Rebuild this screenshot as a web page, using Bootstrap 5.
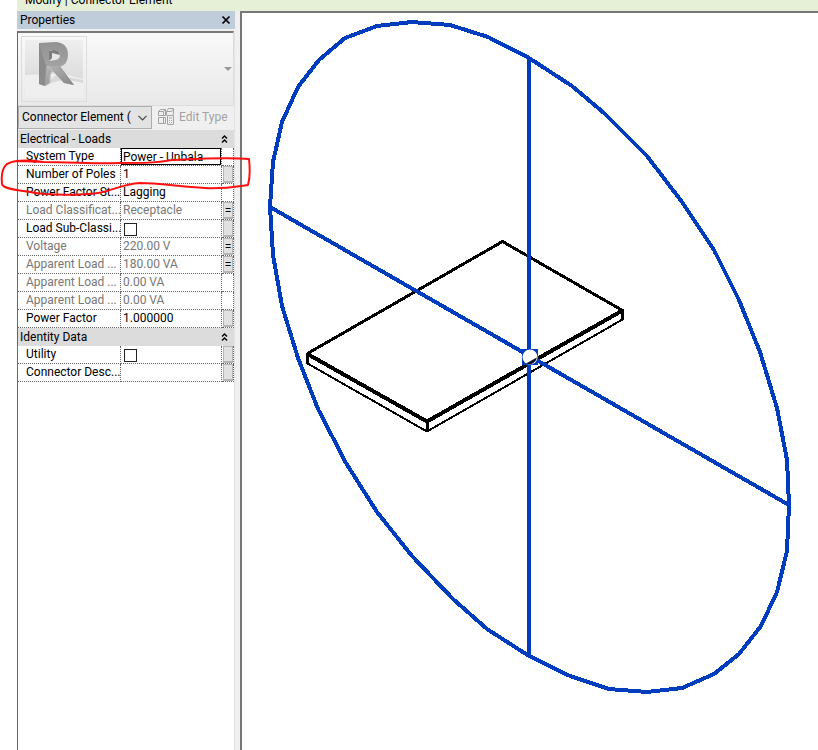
<!DOCTYPE html>
<html lang="en">
<head>
<meta charset="utf-8">
<meta name="viewport" content="width=device-width, initial-scale=1">
<title>Connector Element</title>
<link href="https://cdn.jsdelivr.net/npm/bootstrap@5.3.0/dist/css/bootstrap.min.css" rel="stylesheet">
<style>
body{font-family:Roboto,"Open Sans",sans-serif;font-size:12px;line-height:16px;color:#000;background:#fff}
.app{padding-left:17px}
.ribbon{height:11px;background:#e5f0d7;padding-left:8px}
.ribbon-title{line-height:16px;margin-bottom:3px}
.side{width:223px;background:#f0f0f0;padding-right:5px}
.side-title{height:18px;background:#bfcddb;padding:0 4px 0 3px}
.side-title h1{font-size:12px;line-height:18px;font-weight:400}
.icon-btn{border:0;background:none;padding:0;color:inherit;line-height:0}
.side-body{margin-top:2px;border-left:1px solid #696969;border-right:1px solid #e3e3e3}
.type-box{height:75px;border-top:2px solid #777;border-bottom:1px solid #dcdcdc;border-right:1px solid #dcdcdc;background:linear-gradient(#f9f9f9,#e9e9e9);padding:3px 1px 3px 3px}
.thumb{width:66px;height:66px;border:1px solid #dcdcdc}
.type-row{height:24px;background:#f0f0f0}
.type-select{width:134px;height:23px;border:1px solid #adadad;border-radius:0;background-color:#e3e3e3;padding:0 20px 0 3px;font-size:12px;line-height:21px;appearance:none;color:#000}
.select-wrap .chev{right:5px;top:9px;pointer-events:none}
.edit-btn{font-size:12px;color:#a3a3a3;gap:4px;margin-left:6px;padding:0 0 3px;border:0;background:none}
.props{table-layout:fixed;width:100%;border-collapse:separate;border-spacing:0;background:#fff}
.props td,.props th{height:18px;padding:0;font-weight:400;line-height:16px;vertical-align:middle;white-space:nowrap}
.props .group{background:#dcdcdc;padding:0 6px 0 2px}
.props .cell{border-right:1px dotted #666;border-bottom:1px dotted #666}
.props .name{padding-left:8px}
.props label{display:block;height:17px;line-height:16px}
.props input[type=text]{display:block;width:100%;height:17px;border:0;padding:0 0 1px 2px;background:none;font-size:12px;line-height:16px;color:#000;outline:0}
.props input.active-field{border:1px solid #000;padding:0 0 0 1px}
.props .off label,.props .off input[type=text]{color:#777}
.props input[type=checkbox]{appearance:none;display:block;width:13px;height:13px;margin:2px 0 0 3px;border:1px solid #222;background:#fff}
.assoc{display:block;width:10px;height:17px;margin-left:1px;padding:2px 0 0;border:1px solid #b5b5b5;border-bottom-width:2px;background:#e1e1e1;font-size:12px;line-height:12px;color:#000}
.view{border-left:2px solid #777;border-top:2px solid #777;background:#fff}
.markup{left:0;top:150px;pointer-events:none}
</style>
<script src="https://cdn.jsdelivr.net/npm/bootstrap@5.3.0/dist/js/bootstrap.bundle.min.js"></script>
</head>
<body>
<div class="app position-relative d-flex flex-column min-vh-100">
  <header class="ribbon d-flex align-items-end overflow-hidden flex-shrink-0">
    <div class="ribbon-title">Modify | Connector Element</div>
  </header>
  <main class="d-flex flex-grow-1">
    <aside class="side d-flex flex-column flex-shrink-0">
      <div class="side-title d-flex align-items-center justify-content-between">
        <h1 class="m-0">Properties</h1>
        <button class="icon-btn" type="button" aria-label="Close"><svg width="10" height="10" viewBox="0 0 10 10"><path d="M1.5 1.5 8.5 8.5M8.5 1.5 1.5 8.5" stroke="#000" stroke-width="1.7"/></svg></button>
      </div>
      <div class="side-body flex-grow-1 bg-white">
        <div class="type-box d-flex align-items-center justify-content-between">
          <div class="thumb">
            <svg width="64" height="64" viewBox="0 0 64 64" aria-hidden="true">
              <defs>
                <linearGradient id="back" x2="0" y2="1"><stop stop-color="#efefef"/><stop offset="1" stop-color="#dcdcdc"/></linearGradient>
                <linearGradient id="face" x2="0" y2="1"><stop stop-color="#929292"/><stop offset="1" stop-color="#b0b0b0"/></linearGradient>
                <linearGradient id="leg" x2="1" y2="1"><stop stop-color="#b5b5b5"/><stop offset="1" stop-color="#858585"/></linearGradient>
              </defs>
              <path d="M3 3H61V42L42 37 3 38Z" fill="url(#back)"/>
              <path d="M3 38 42 37 61 45V61H3Z" fill="#efefef"/>
              <path d="M22 48 34 38 61 43V46L44 42Z" fill="#d9d9d9"/>
              <path d="M17 6 34 5Q46 6 46 18 46 27 38 30L52 48 42 46 29 32 28 46 23 49 17 47ZM27 14V24L34 23Q38 22 38 18 37 13 32 13Z" fill="url(#face)" fill-rule="evenodd"/>
              <path d="M25 29 38 29 52 48 42 46 31 34 28 36V46L23 49Z" fill="url(#leg)"/>
              <path d="M17 6 24 29 23 49 17 47Z" fill="#8b8b8b"/>
              <path d="M27 14V24L30 21V16L38 18Q37 13 32 13Z" fill="#7d7d7d"/>
              <path d="M25 29 31 34 28 38V46L23 49" fill="none" stroke="#c4c4c4"/>
            </svg>
          </div>
          <button class="icon-btn" type="button" aria-label="Choose type"><svg width="8" height="4" viewBox="0 0 8 4"><path d="M0 0H8L4 4Z" fill="#999"/></svg></button>
        </div>
        <div class="type-row d-flex">
          <div class="select-wrap position-relative">
            <select class="type-select" aria-label="Element filter"><option>Connector Element (1)</option></select>
            <svg class="chev position-absolute" width="9" height="6" viewBox="0 0 9 6"><path d="M.5 .8 4.5 4.8 8.5 .8" fill="none" stroke="#444" stroke-width="1.2"/></svg>
          </div>
          <button class="edit-btn d-flex align-items-center" type="button" disabled>
            <svg width="17" height="17" viewBox="0 0 17 17" fill="none" stroke="#a3a3a3"><path d="M.5 3.5 2.5 1.5H7.5V7.500H.5ZM8.500 3.500 10.500 .5H15.500V6L14 7.500M8.500 3.500V7.500M.5 9.500H7.500V15.500H.5ZM.5 3.500H5.500V7.500M5.500 3.500 7.500 1.500M8.500 3.500H13.500L15.500 1M5.500 9.500V15.500"/><path d="M9.500 7.500H15.500V16.500H9.500Z" fill="#f0f0f0"/><path d="M11 10H14M11 12.500H12M13 12.500H14M11 14.500H12M13 14.500H14"/></svg>
            <span>Edit Type</span>
          </button>
        </div>
        <table class="props">
          <colgroup><col style="width:103px"><col><col style="width:12px"></colgroup>
          <tbody>
          <tr><th class="group" colspan="3" scope="colgroup"><div class="d-flex align-items-center justify-content-between"><span>Electrical - Loads</span><button class="icon-btn" type="button" aria-label="Collapse Electrical - Loads"><svg width="7" height="8" viewBox="0 0 7 8"><path d="M1 3.500 3.500 1 6 3.500M1 7.500 3.500 5 6 7.500" fill="none" stroke="#000" stroke-width="1.4"/></svg></button></div></th></tr>
          <tr><td class="cell name"><label for="p1">System Type</label></td><td class="cell"><input id="p1" class="active-field" type="text" value="Power - Unbala"></td><td class="cell"></td></tr>
          <tr><td class="cell name"><label for="p2">Number of Poles</label></td><td class="cell"><input id="p2" type="text" value="1"></td><td class="cell"><button class="assoc" type="button" aria-label="Associate Number of Poles"></button></td></tr>
          <tr><td class="cell name"><label for="p3">Power Factor St...</label></td><td class="cell"><input id="p3" type="text" value="Lagging"></td><td class="cell"></td></tr>
          <tr class="off"><td class="cell name"><label for="p4">Load Classificat...</label></td><td class="cell"><input id="p4" type="text" value="Receptacle" readonly></td><td class="cell"><button class="assoc" type="button">=</button></td></tr>
          <tr><td class="cell name"><label for="p5">Load Sub-Classi...</label></td><td class="cell"><input id="p5" type="checkbox"></td><td class="cell"><button class="assoc" type="button" aria-label="Associate Load Sub-Classification"></button></td></tr>
          <tr class="off"><td class="cell name"><label for="p6">Voltage</label></td><td class="cell"><input id="p6" type="text" value="220.00 V" readonly></td><td class="cell"><button class="assoc" type="button">=</button></td></tr>
          <tr class="off"><td class="cell name"><label for="p7">Apparent Load ...</label></td><td class="cell"><input id="p7" type="text" value="180.00 VA" readonly></td><td class="cell"><button class="assoc" type="button">=</button></td></tr>
          <tr class="off"><td class="cell name"><label for="p8">Apparent Load ...</label></td><td class="cell"><input id="p8" type="text" value="0.00 VA" readonly></td><td class="cell"></td></tr>
          <tr class="off"><td class="cell name"><label for="p9">Apparent Load ...</label></td><td class="cell"><input id="p9" type="text" value="0.00 VA" readonly></td><td class="cell"></td></tr>
          <tr><td class="cell name"><label for="p10">Power Factor</label></td><td class="cell"><input id="p10" type="text" value="1.000000"></td><td class="cell"><button class="assoc" type="button" aria-label="Associate Power Factor"></button></td></tr>
          <tr><th class="group" colspan="3" scope="colgroup"><div class="d-flex align-items-center justify-content-between"><span>Identity Data</span><button class="icon-btn" type="button" aria-label="Collapse Identity Data"><svg width="7" height="8" viewBox="0 0 7 8"><path d="M1 3.500 3.500 1 6 3.500M1 7.500 3.500 5 6 7.500" fill="none" stroke="#000" stroke-width="1.4"/></svg></button></div></th></tr>
          <tr><td class="cell name"><label for="p11">Utility</label></td><td class="cell"><input id="p11" type="checkbox"></td><td class="cell"><button class="assoc" type="button" aria-label="Associate Utility"></button></td></tr>
          <tr><td class="cell name"><label for="p12">Connector Desc...</label></td><td class="cell"><input id="p12" type="text" value=""></td><td class="cell"><button class="assoc" type="button" aria-label="Associate Connector Description"></button></td></tr>
          </tbody>
        </table>
      </div>
    </aside>
    <section class="view flex-grow-1 overflow-hidden" aria-label="3D view">
      <svg class="d-block w-100" viewBox="242 13 576 737" fill="none" shape-rendering="crispEdges">
        <g stroke="#000">
          <path d="M307.500 353.500 502.500 241.500 622.500 310.500" stroke-width="3" stroke-linejoin="round"/>
          <path d="M307.500 363.500 427 431.500 622.500 319.500" stroke-width="2"/>
          <path d="M307.500 352.500V363.500M427 421V432M622.500 309V320" stroke-width="3"/>
          <path d="M307.500 354 427 421.500 622.500 310.500" stroke-width="4"/>
        </g>
        <g stroke="#003cbe" stroke-width="4">
          <path d="M529 58V656M270 207 789 505"/>
          <path d="M270 207 273 162 282 122 298 87 319 60 345 38 377 26 412 22 450 25 488 37 529 58 572 86 604 113 647 156 682 202 714 250 739 300 760 352 777 408 787 460 789 505 787 551 777 592 761 626 739 654 714 674 682 688 647 692 609 689 570 676 529 656 487 629 453 599 412 556 377 512 346 463 318 409 298 358 282 306 273 255Z"/>
        </g>
        <g shape-rendering="auto">
          <path d="M522 349H538V365H522Z" fill="#003cbe"/>
          <circle cx="530" cy="357" r="7.500" fill="#fff"/>
          <path d="M526 363.400 536.800 357.500A7.500 7.500 0 0 1 526 363.400Z" fill="#0b0f20"/>
        </g>
      </svg>
    </section>
  </main>
  <svg class="markup position-absolute" width="256" height="50" viewBox="0 150 256 50" fill="none" stroke="#ff1010" stroke-width="2" stroke-linecap="round" stroke-linejoin="round" aria-hidden="true">
    <path d="M17 161 43 162C70 162 100 164 118 163 145 163 155 163 172 160 195 159 225 157 249 159 250 168 250 178 248 185 240 186 225 189 205 188 180 187 160 183 140 183 122 184 112 191 98 193 83 195 50 196 30 192 18 190 3 189 2 184 1 177 2 168 7 164 13 161 22 159 43 162"/>
  </svg>
</div>
</body>
</html>
